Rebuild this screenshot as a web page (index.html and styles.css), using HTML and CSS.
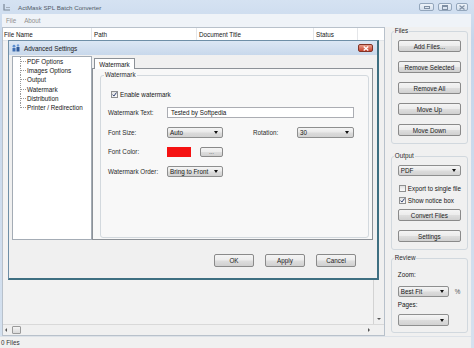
FILE: index.html
```html
<!DOCTYPE html>
<html lang="en">

<head>
  <meta charset="UTF-8" />
  <meta name="viewport" content="width=device-width, initial-scale=1.0" />
  <title>ActMask SPL Batch Converter</title>
  <link rel="stylesheet" href="styles.css">
</head>

<body>
  <div class="window">
    <div class="titlebar">
      <svg class="app-icon" width="8" height="8" viewBox="0 0 8 8">
        <path d="M1 1v6h6" fill="none" stroke="#7b8796" stroke-width="1.2" />
        <path d="M3 4.5h4" fill="none" stroke="#a3aebb" stroke-width="1" />
      </svg>
      <span class="title">ActMask SPL Batch Converter</span>
      <div class="winbtns">
        <span class="winbtn min"><i class="glyph-min"></i></span>
        <span class="winbtn max"><i class="glyph-max"></i></span>
        <span class="winbtn close">
          <svg width="6" height="5" viewBox="0 0 6 5"><path d="M0.5 0.5l5 4M5.5 0.5l-5 4" stroke="#7f8fa3" stroke-width="1.2" /></svg>
        </span>
      </div>
    </div>

    <div class="client">
      <div class="menubar">
        <span>File</span>
        <span>About</span>
      </div>

      <div class="main">
        <div class="listview">
          <div class="list-header">
            <span class="col col-name">File Name</span>
            <span class="col col-path">Path</span>
            <span class="col col-title">Document Title</span>
            <span class="col col-status">Status</span>
          </div>
          <div class="list-body">
            <div class="list-rows"></div>
            <div class="vscroll"><span class="arrow-down"></span></div>
          </div>
          <div class="hscroll">
            <span class="arrow-left"></span>
            <span class="thumb"></span>
            <span class="arrow-right"></span>
            <span class="corner"></span>
          </div>
        </div>

        <div class="side">
          <fieldset class="group">
            <legend>Files</legend>
            <div class="group-body files-body">
              <button class="btn">Add Files...</button>
              <button class="btn">Remove Selected</button>
              <button class="btn">Remove All</button>
              <button class="btn move-up">Move Up</button>
              <button class="btn move-down">Move Down</button>
            </div>
          </fieldset>

          <fieldset class="group output">
            <legend>Output</legend>
            <div class="group-body output-body">
              <div class="combo"><span>PDF</span><i class="caret"></i></div>
              <label class="check-row first"><span class="chk"></span>Export to single file</label>
              <label class="check-row">
                <span class="chk">
                  <svg width="5" height="5" viewBox="0 0 5 5"><path d="M0.6 2.6l1.3 1.5 2.6-3.6" fill="none" stroke="#2d3f6e" stroke-width="1" /></svg>
                </span>Show notice box
              </label>
              <button class="btn convert">Convert Files</button>
              <button class="btn settings">Settings</button>
            </div>
          </fieldset>

          <fieldset class="group review">
            <legend>Review</legend>
            <div class="group-body review-body">
              <div class="caption">Zoom:</div>
              <div class="zoom-row">
                <div class="combo narrow"><span>Best Fit</span><i class="caret"></i></div>
                <span class="pct">%</span>
              </div>
              <div class="caption">Pages:</div>
              <div class="combo narrow pages"><span></span><i class="caret"></i></div>
            </div>
          </fieldset>
        </div>
      </div>

      <div class="statusbar">0 Files</div>
    </div>

    <div class="dialog">
      <div class="dlg-title">
        <svg class="dlg-icon" width="8" height="8" viewBox="0 0 8 8">
          <rect x="0.5" y="4" width="3" height="3.5" fill="#3f6fb3" />
          <rect x="4.5" y="3" width="3" height="4.5" fill="#2f5a9a" />
          <circle cx="2" cy="2.2" r="1.4" fill="#5d8fd0" />
          <circle cx="6" cy="1.4" r="1.2" fill="#6a9ad8" />
        </svg>
        <span class="dlg-title-text">Advanced Settings</span>
        <span class="dlg-close">
          <svg width="6" height="5" viewBox="0 0 6 5"><path d="M0.7 0.5l4.6 4M5.3 0.5l-4.6 4" stroke="#fff" stroke-width="1.3" /></svg>
        </span>
      </div>

      <div class="dlg-client">
        <div class="dlg-top">
          <div class="tree">
            <ul>
              <li>PDF Options</li>
              <li>Images Options</li>
              <li>Output</li>
              <li>Watermark</li>
              <li>Distribution</li>
              <li>Printer / Redirection</li>
            </ul>
          </div>

          <div class="tabs">
            <div class="tab-strip">
              <span class="tab">Watermark</span>
            </div>
            <div class="tab-panel">
              <fieldset class="wm-group">
                <legend>Watermark</legend>
                <div class="wm-body">
                  <label class="check-row enable">
                    <span class="chk">
                      <svg width="5" height="5" viewBox="0 0 5 5"><path d="M0.6 2.6l1.3 1.5 2.6-3.6" fill="none" stroke="#2d3f6e" stroke-width="1" /></svg>
                    </span>Enable watermark
                  </label>

                  <div class="form-row">
                    <span class="label">Watermark Text:</span>
                    <div class="textbox">Tested by Softpedia</div>
                  </div>

                  <div class="form-row">
                    <span class="label">Font Size:</span>
                    <div class="combo size"><span>Auto</span><i class="caret"></i></div>
                    <span class="label rot-label">Rotation:</span>
                    <div class="combo rot"><span>30</span><i class="caret"></i></div>
                  </div>

                  <div class="form-row tight">
                    <span class="label">Font Color:</span>
                    <span class="swatch"></span>
                    <button class="btn dots">...</button>
                  </div>

                  <div class="form-row">
                    <span class="label">Watermark Order:</span>
                    <div class="combo order"><span>Bring to Front</span><i class="caret"></i></div>
                  </div>
                </div>
              </fieldset>
            </div>
          </div>
        </div>

        <div class="dlg-buttons">
          <button class="btn">OK</button>
          <button class="btn">Apply</button>
          <button class="btn">Cancel</button>
        </div>
      </div>
    </div>
  </div>
</body>

</html>
```

FILE: styles.css
```css
* {
  margin: 0;
  padding: 0;
  box-sizing: border-box;
}

body {
  width: 474px;
  height: 348px;
  overflow: hidden;
  font-family: "Liberation Sans", Arial, sans-serif;
  font-size: 6.3px;
  color: #151515;
  background: #cfdcec;
}

button {
  font: inherit;
  color: inherit;
}

ul {
  list-style: none;
}

.window {
  position: relative;
  width: 474px;
  height: 348px;
  display: flex;
  flex-direction: column;
  background: linear-gradient(#d5e2f2, #c5d6eb 40px, #d5e1ef);
}

/* title bar */
.titlebar {
  flex: none;
  height: 14px;
  display: flex;
  align-items: center;
  padding: 0 6px 0 3px;
}

.title {
  margin-left: 7px;
  color: #505b68;
  font-size: 6.2px;
}

.winbtns {
  margin-left: auto;
  display: flex;
  gap: 4px;
}

.winbtn {
  width: 14px;
  height: 8px;
  display: flex;
  align-items: center;
  justify-content: center;
  border: 1px solid #93a6bc;
  border-radius: 2px;
  background: linear-gradient(#eef3f9, #d3deec);
}

.winbtn.min {
  width: 15px;
}

.winbtn.close {
  width: 12px;
}

.glyph-min {
  width: 6px;
  height: 3px;
  border: 1px solid #7f8fa3;
}

.glyph-max {
  width: 6px;
  height: 5px;
  border: 1px solid #7f8fa3;
  border-top-width: 2px;
}

/* client area */
.client {
  flex: 1;
  display: flex;
  flex-direction: column;
  margin: 0 3px 0 2px;
  background: #f0f0f0;
}

.menubar {
  flex: none;
  height: 13px;
  display: flex;
  align-items: center;
  gap: 8px;
  padding-left: 4px;
  background: #eff3f8;
  color: #8f8f8f;
}

.main {
  flex: 1;
  display: flex;
  min-height: 0;
}

/* list view */
.listview {
  width: 384px;
  display: flex;
  flex-direction: column;
  border: 1px solid #b8c1cb;
  background: #f2f2f2;
}

.list-header {
  flex: none;
  height: 13px;
  display: flex;
  background: #fff;
  border-bottom: 1px solid #e2e5e9;
}

.col {
  display: flex;
  align-items: center;
  padding-left: 1px;
  border-right: 1px solid #e4e6e9;
}

.col-name {
  width: 89px;
}

.col-path {
  width: 105px;
  padding-left: 2px;
}

.col-title {
  width: 117px;
  padding-left: 2px;
}

.col-status {
  width: 44px;
  padding-left: 2px;
}

.list-body {
  flex: 1;
  display: flex;
}

.list-rows {
  flex: 1;
}

.vscroll {
  width: 11px;
  display: flex;
  flex-direction: column;
  justify-content: flex-end;
  align-items: center;
  padding-bottom: 4px;
  border-left: 1px solid #d3d3d3;
  background: #f0f0f0;
}

.arrow-down {
  border-left: 2px solid transparent;
  border-right: 2px solid transparent;
  border-top: 2px solid #555;
}

.hscroll {
  flex: none;
  height: 11px;
  display: flex;
  align-items: center;
  padding-left: 2px;
  border-top: 1px solid #d9d9d9;
  background: #f0f0f0;
}

.arrow-left {
  border-top: 2px solid transparent;
  border-bottom: 2px solid transparent;
  border-right: 2px solid #555;
}

.arrow-right {
  margin-left: auto;
  margin-right: 3px;
  border-top: 2px solid transparent;
  border-bottom: 2px solid transparent;
  border-left: 2px solid #555;
}

.thumb {
  width: 9px;
  height: 8px;
  margin-left: 5px;
  border: 1px solid #9a9a9a;
  border-radius: 1px;
  background: linear-gradient(#f5f5f5, #d9d9d9);
}

.corner {
  width: 11px;
  align-self: stretch;
}

/* right side panel */
.side {
  flex: 1;
  display: flex;
  flex-direction: column;
  padding: 0 3px 0 6px;
}

.group {
  border: 1px solid #d1d8de;
  border-radius: 3px;
  padding: 0;
}

.group legend,
.wm-group legend {
  margin-left: 2px;
  padding: 0 1px;
  line-height: 8px;
  color: #2a2a2a;
}

.group-body {
  display: flex;
  flex-direction: column;
  padding: 5px 6px 7px;
}

.btn {
  height: 12px;
  border: 1px solid #8a8a8a;
  border-radius: 2px;
  background: linear-gradient(#f4f4f4 0%, #ececec 48%, #dedede 52%, #d0d0d0 100%);
  color: #1a1a1a;
  white-space: nowrap;
}

.files-body .btn + .btn {
  margin-top: 9px;
}

.files-body .move-up {
  margin-top: 13px;
}

.files-body .move-down {
  margin-top: 10px;
}

.output {
  margin-top: 8px;
}

.combo {
  height: 11px;
  display: flex;
  align-items: center;
  justify-content: space-between;
  padding: 0 4px 0 2px;
  border: 1px solid #8e8f8f;
  border-radius: 2px;
  background: linear-gradient(#f5f5f5 0%, #e9e9e9 48%, #dcdcdc 52%, #d2d2d2 100%);
  white-space: nowrap;
}

.caret {
  border-left: 2px solid transparent;
  border-right: 2px solid transparent;
  border-top: 3px solid #111;
}

.check-row {
  height: 12px;
  display: flex;
  align-items: center;
  padding-left: 1px;
  white-space: nowrap;
}

.check-row.first {
  margin-top: 6px;
}

.chk {
  flex: none;
  width: 7px;
  height: 7px;
  margin-right: 2px;
  display: flex;
  align-items: center;
  justify-content: center;
  border: 1px solid #8e8f8f;
  background: linear-gradient(#e2e2e2, #fbfbfb);
}

.output .convert {
  margin-top: 3px;
}

.output .settings {
  margin-top: 9px;
}

.review {
  margin-top: 4px;
}

.review-body {
  padding-bottom: 6px;
}

.caption {
  height: 8px;
  line-height: 8px;
  margin-top: 4px;
}

.zoom-row {
  display: flex;
  align-items: center;
  margin-top: 7px;
}

.combo.narrow {
  width: 51px;
}

.combo.pages {
  height: 12px;
  margin-top: 5px;
}

.pct {
  margin-left: 6px;
  color: #555;
}

.statusbar {
  flex: none;
  height: 12px;
  display: flex;
  align-items: center;
  margin-left: -2px;
  padding-left: 1px;
  border-top: 1px solid #dde2e8;
  background: #f0f0f0;
  color: #333;
}

/* advanced settings dialog, floating over the list */
.dialog {
  position: absolute;
  left: 8px;
  top: 40px;
  width: 371px;
  height: 240px;
  display: flex;
  flex-direction: column;
  background: #f0f0f0;
  border: 1px solid #6f8fa7;
  border-right: 2px solid #3e6f81;
  border-bottom: 2px solid #3e6f81;
}

.dlg-title {
  flex: none;
  height: 14px;
  display: flex;
  align-items: center;
  padding: 0 4px 0 3px;
  background: linear-gradient(#dce7f4, #c8d8eb);
}

.dlg-title-text {
  margin-left: 4px;
  color: #1c1c1c;
  font-size: 6.4px;
}

.dlg-close {
  margin-left: auto;
  width: 15px;
  height: 8px;
  display: flex;
  align-items: center;
  justify-content: center;
  border: 1px solid #823326;
  border-radius: 2px;
  background: linear-gradient(#e9a08d, #c7432e);
}

.dlg-client {
  flex: 1;
  display: flex;
  flex-direction: column;
  margin: 0 2px;
  padding: 1px 2px 0 1px;
}

.dlg-top {
  height: 184px;
  display: flex;
}

.tree {
  width: 80px;
  padding-left: 7px;
  border: 1px solid #a4acb5;
  background: #fff;
}

.tree li {
  height: 9.2px;
  display: flex;
  align-items: center;
  white-space: nowrap;
  background-image: repeating-linear-gradient(to bottom, #9a9a9a 0 1px, transparent 1px 2px);
  background-size: 1px 100%;
  background-repeat: no-repeat;
}

.tree li:last-child {
  background-size: 1px 50%;
}

.tree li::before {
  content: "";
  width: 6px;
  margin-right: 1px;
  border-top: 1px dotted #9a9a9a;
}

.tabs {
  flex: 1;
  display: flex;
  flex-direction: column;
}

.tab-strip {
  flex: none;
  height: 12px;
  display: flex;
  align-items: flex-end;
  padding-left: 2px;
}

.tab {
  position: relative;
  z-index: 1;
  width: 41px;
  height: 11px;
  margin-bottom: -1px;
  display: flex;
  align-items: center;
  justify-content: center;
  border: 1px solid #8c9197;
  border-bottom: 0;
  background: #fff;
}

.tab-panel {
  flex: 1;
  display: flex;
  flex-direction: column;
  padding: 2px 3px 1px 7px;
  border: 1px solid #8c9197;
  background: #f8f8f8;
}

.wm-group {
  flex: 1;
  padding: 0;
  border: 1px solid #d3d9de;
  border-radius: 3px;
}

.wm-group legend {
  margin-left: 3px;
}

.wm-body {
  padding: 11px 0 0 7px;
}

.check-row.enable {
  height: 8px;
  padding-left: 3px;
}

.form-row {
  height: 11px;
  display: flex;
  align-items: center;
  margin-top: 9px;
  white-space: nowrap;
}

.form-row.tight {
  margin-top: 8px;
}

.label {
  width: 59px;
  color: #2a2a2a;
}

.textbox {
  width: 187px;
  height: 11px;
  display: flex;
  align-items: center;
  padding-left: 3px;
  border: 1px solid #abadb3;
  background: #fff;
}

.combo.size,
.combo.order {
  width: 56px;
}

.rot-label {
  width: 44px;
  margin-left: 30px;
}

.combo.rot {
  width: 57px;
}

.swatch {
  width: 24px;
  height: 10px;
  background: #f51212;
}

.btn.dots {
  width: 23px;
  height: 10px;
  margin-left: 9px;
  line-height: 4px;
  color: #666;
}

.dlg-buttons {
  display: flex;
  justify-content: flex-end;
  gap: 11px;
  margin-top: 14px;
  padding-right: 17px;
}

.dlg-buttons .btn {
  width: 40px;
  height: 13px;
}
```
